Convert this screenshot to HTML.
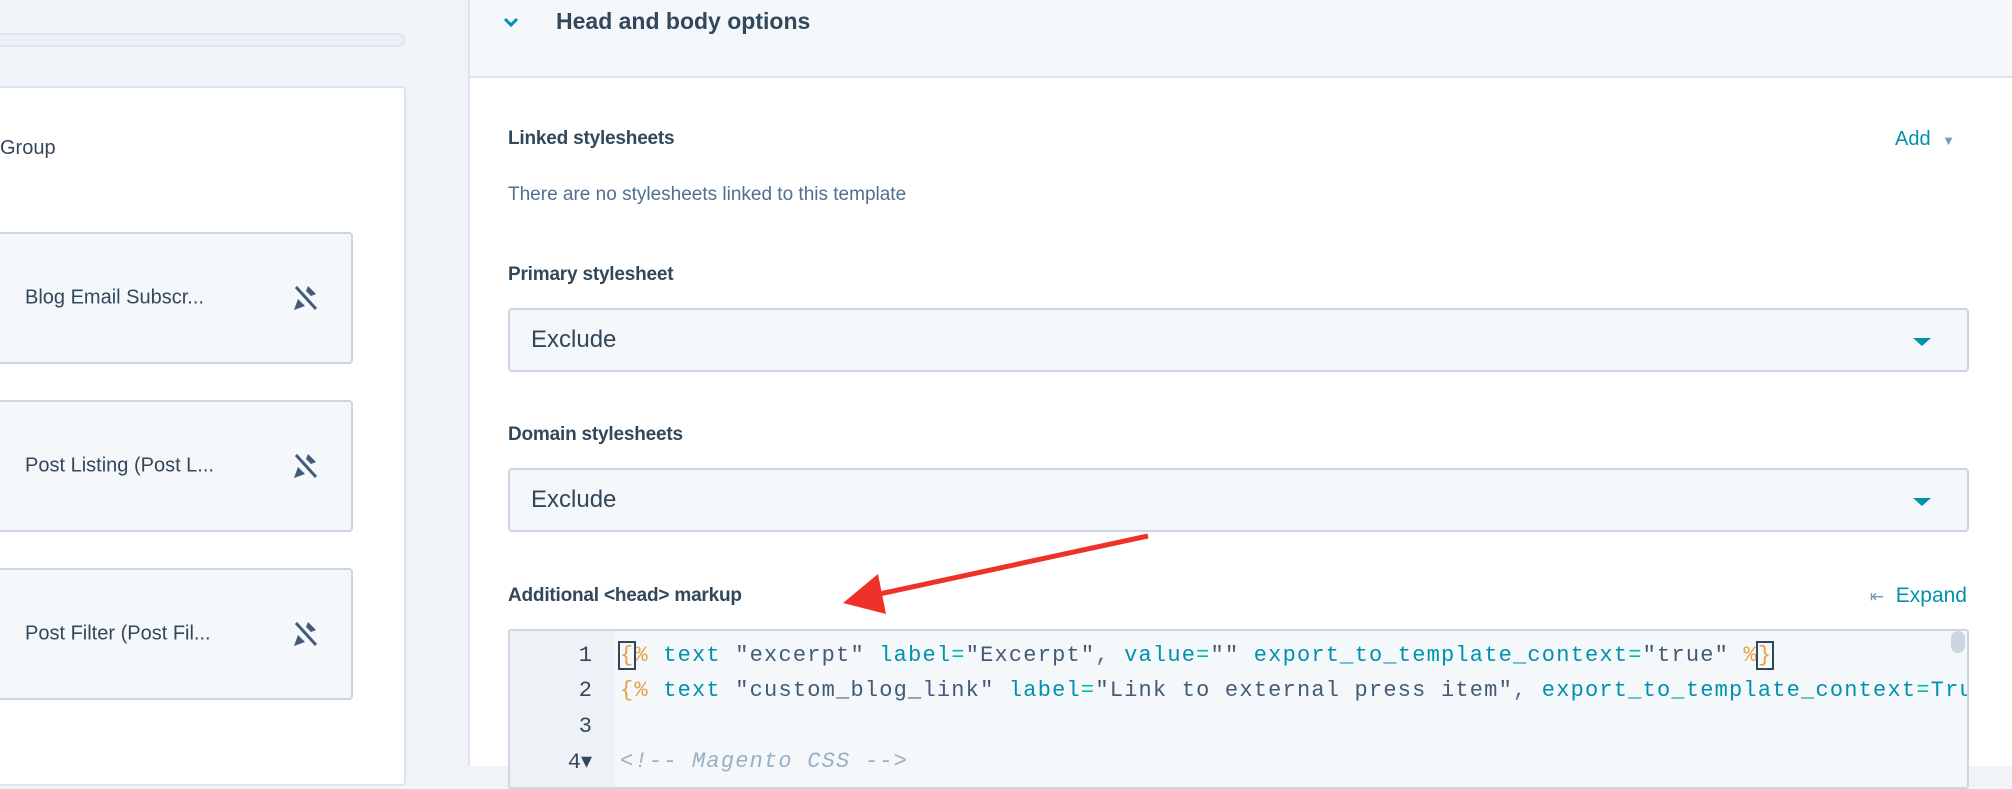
<!DOCTYPE html>
<html><head><meta charset="utf-8"><style>
*{margin:0;padding:0;box-sizing:border-box}
body{width:2012px;height:766px;overflow:hidden;background:#f0f3f7;font-family:"Liberation Sans",sans-serif;color:#33475b;position:relative}
.a{position:absolute}
.pill{left:-20px;top:33px;width:425px;height:14px;border:2px solid #dbe3ec;border-radius:8px;background:#eaf0f6}
.lcard{left:-5px;top:86px;width:411px;height:700px;background:#fff;border:2px solid #dfe5ec;border-radius:4px}
.card{left:-10px;width:363px;height:132px;background:#f5f8fa;border:2px solid #cbd6e2;border-radius:4px}
.card span{position:absolute;left:33px;top:50%;transform:translateY(-50%);font-size:20px}
.card svg{position:absolute;left:298px;top:50%;transform:translateY(-50%)}
.rp{left:468px;top:0;width:1544px;height:766px;background:#fff;border-left:2px solid #dfe5ec}
.hdr{left:468px;top:0;width:1544px;height:78px;background:#f5f8fa;border-left:2px solid #dfe5ec;border-bottom:2px solid #dfe5ec}
.lbl{font-size:19px;font-weight:bold;color:#33475b;letter-spacing:-0.2px}
.sel{left:508px;width:1461px;height:64px;background:#f5f8fa;border:2px solid #cbd6e2;border-radius:4px}
.sel span{position:absolute;left:21px;top:50%;transform:translateY(-50%);font-size:24px}
.sel i{position:absolute;right:36px;top:28px;border-left:9px solid transparent;border-right:9px solid transparent;border-top:8px solid #0091ae}
.ed{left:508px;top:629px;width:1461px;height:160px;background:#f5f8fa;border:2px solid #cbd6e2;border-radius:3px;overflow:hidden}
.gut{position:absolute;left:0;top:0;width:105px;height:100%;background:#eef2f7}
.ln{position:absolute;left:0;width:82px;text-align:right;font-family:"Liberation Mono",monospace;font-size:22px;color:#33475b}
.code{position:absolute;left:110px;white-space:pre;font-family:"Liberation Mono",monospace;font-size:22px;letter-spacing:1.2px;color:#516f90}
.t{color:#0091ae}.o{color:#e5a040}.g{color:#00bda5}.s{color:#425b76}
</style></head><body>
<div class="a pill"></div>
<div class="a lcard"></div>
<div class="a" style="left:0;top:137px;font-size:20px">Group</div>
<div class="a card" style="top:232px"><span>Blog Email Subscr...</span><svg width="30" height="30" viewBox="0 0 30 30"><path d="M6 4 L26 26" stroke="#425b76" stroke-width="3"/><path d="M18 3 l8 8 -5 2 -5 -5z" fill="#425b76"/><path d="M4 27 l4-11 7 7z" fill="#425b76"/></svg></div>
<div class="a card" style="top:400px"><span>Post Listing (Post L...</span><svg width="30" height="30" viewBox="0 0 30 30"><path d="M6 4 L26 26" stroke="#425b76" stroke-width="3"/><path d="M18 3 l8 8 -5 2 -5 -5z" fill="#425b76"/><path d="M4 27 l4-11 7 7z" fill="#425b76"/></svg></div>
<div class="a card" style="top:568px"><span>Post Filter (Post Fil...</span><svg width="30" height="30" viewBox="0 0 30 30"><path d="M6 4 L26 26" stroke="#425b76" stroke-width="3"/><path d="M18 3 l8 8 -5 2 -5 -5z" fill="#425b76"/><path d="M4 27 l4-11 7 7z" fill="#425b76"/></svg></div>

<div class="a rp"></div>
<div class="a hdr"></div>
<svg class="a" style="left:503px;top:16px" width="16" height="12" viewBox="0 0 16 12"><path d="M2 3 L8 9 L14 3" stroke="#0091ae" stroke-width="3" fill="none"/></svg>
<div class="a" style="left:556px;top:8px;font-size:23px;font-weight:bold">Head and body options</div>

<div class="a lbl" style="left:508px;top:128px">Linked stylesheets</div>
<div class="a" style="left:1895px;top:128px;font-size:20px;color:#0091ae">Add <span style="font-size:13px;color:#7c98b6;margin-left:6px">▼</span></div>
<div class="a" style="left:508px;top:184px;font-size:19px;color:#516f90">There are no stylesheets linked to this template</div>
<div class="a lbl" style="left:508px;top:264px">Primary stylesheet</div>
<div class="a sel" style="top:308px"><span>Exclude</span><i></i></div>
<div class="a lbl" style="left:508px;top:424px">Domain stylesheets</div>
<div class="a sel" style="top:468px"><span>Exclude</span><i></i></div>
<div class="a lbl" style="left:508px;top:585px">Additional &lt;head&gt; markup</div>
<div class="a" style="left:1849px;top:584px;font-size:21px;color:#0091ae;width:118px;text-align:right"><span style="color:#7c98b6;font-size:17px">⇤</span>&nbsp; Expand</div>

<div class="a ed">
<div class="gut"></div>
<div class="ln" style="top:12px">1</div><div class="ln" style="top:47px">2</div><div class="ln" style="top:83px">3</div><div class="ln" style="top:118px">4▾</div>
<div class="code" style="top:12px"><span style="outline:2px solid #33475b" class="o">{</span><span class="o">%</span> <span class="t">text</span> <span class="s">"excerpt"</span> <span class="t">label</span><span class="g">=</span><span class="s">"Excerpt"</span>, <span class="t">value</span><span class="g">=</span><span class="s">""</span> <span class="t">export_to_template_context</span><span class="g">=</span><span class="s">"true"</span> <span class="o">%</span><span style="outline:2px solid #33475b" class="o">}</span></div>
<div class="code" style="top:47px"><span class="o">{%</span> <span class="t">text</span> <span class="s">"custom_blog_link"</span> <span class="t">label</span><span class="g">=</span><span class="s">"Link to external press item"</span>, <span class="t">export_to_template_context</span><span class="g">=</span><span class="t">True</span></div>
<div class="code" style="top:118px;color:#99afc4;font-style:italic">&lt;!-- Magento CSS --&gt;</div>
<div style="position:absolute;right:2px;top:0;width:14px;height:22px;background:#cbd6e2;border-radius:7px"></div>
</div>

<svg class="a" style="left:0;top:0" width="2012" height="766"><path d="M1148 536 L870 596" stroke="#f0312a" stroke-width="5"/><path d="M843 603 L878 574 L886 614z" fill="#f0312a"/></svg>
</body></html>
